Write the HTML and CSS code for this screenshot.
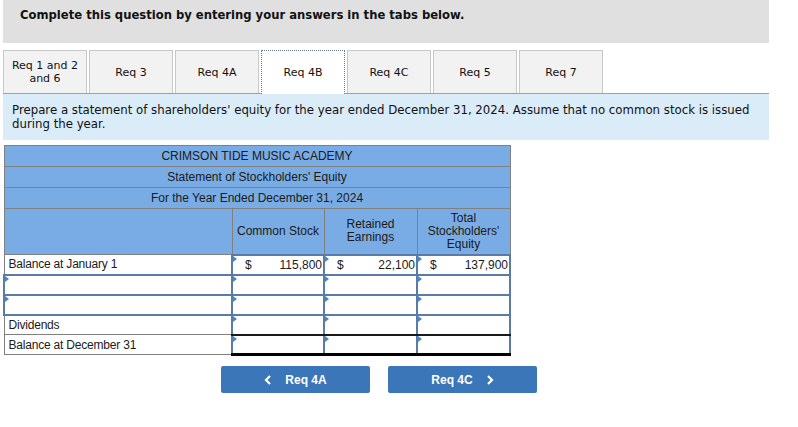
FILE: index.html
```html
<!DOCTYPE html>
<html>
<head>
<meta charset="utf-8">
<link rel="stylesheet" href="styles.css">
</head>
<body>
<div class="wrap">
  <div class="header">Complete this question by entering your answers in the tabs below.</div>
  <div class="tabs">
    <div class="tab">Req 1 and 2<br>and 6</div>
    <div class="tab">Req 3</div>
    <div class="tab">Req 4A</div>
    <div class="tab active">Req 4B</div>
    <div class="tab">Req 4C</div>
    <div class="tab">Req 5</div>
    <div class="tab">Req 7</div>
  </div>
  <div class="prompt">Prepare a statement of shareholders' equity for the year ended December 31, 2024. Assume that no common stock is issued during the year.</div>
  <table class="stmt">
    <colgroup>
      <col class="c1"><col class="c2"><col class="c3"><col class="c4">
    </colgroup>
    <tr class="title"><td colspan="4">CRIMSON TIDE MUSIC ACADEMY</td></tr>
    <tr class="title"><td colspan="4">Statement of Stockholders' Equity</td></tr>
    <tr class="title"><td colspan="4">For the Year Ended December 31, 2024</td></tr>
    <tr class="colhead">
      <td></td>
      <td>Common Stock</td>
      <td>Retained<br>Earnings</td>
      <td>Total<br>Stockholders'<br>Equity</td>
    </tr>
    <tr class="row">
      <td class="label">Balance at January 1</td>
      <td class="inp"><span class="cur">$</span><span class="num">115,800</span></td>
      <td class="inp"><span class="cur">$</span><span class="num">22,100</span></td>
      <td class="inp"><span class="cur">$</span><span class="num">137,900</span></td>
    </tr>
    <tr class="row">
      <td class="inp"></td><td class="inp"></td><td class="inp"></td><td class="inp"></td>
    </tr>
    <tr class="row">
      <td class="inp"></td><td class="inp"></td><td class="inp"></td><td class="inp"></td>
    </tr>
    <tr class="row under">
      <td class="label">Dividends</td><td class="inp"></td><td class="inp"></td><td class="inp"></td>
    </tr>
    <tr class="row total">
      <td class="label">Balance at December 31</td><td class="inp"></td><td class="inp"></td><td class="inp"></td>
    </tr>
  </table>
  <div class="nav">
    <div class="btn prev"><svg class="chev" width="8" height="10" viewBox="0 0 8 10"><polyline points="6,1 2,5 6,9" fill="none" stroke="#fff" stroke-width="2.2"/></svg>Req 4A</div>
    <div class="btn next">Req 4C<svg class="chev" width="8" height="10" viewBox="0 0 8 10"><polyline points="2,1 6,5 2,9" fill="none" stroke="#fff" stroke-width="2.2"/></svg></div>
  </div>
</div>
</body>
</html>
```

FILE: styles.css
```css
* { box-sizing: border-box; }
body {
  margin: 0;
  background: #fff;
  font-family: "DejaVu Sans", Verdana, sans-serif;
  color: #111;
}
.wrap {
  width: 769px;
  padding-left: 3px;
}
.header {
  background: #e0e0e0;
  height: 43px;
  padding: 8px 0 0 17px;
  font-size: 11.6px;
  font-weight: bold;
  color: #111;
}
.tabs {
  display: flex;
  gap: 2px;
  margin-top: 7px;
  height: 44px;
  border-bottom: 1px solid #a0a0a0;
}
.tab {
  width: 84px;
  height: 43px;
  background: #f2f2f2;
  border: 1px solid #c8c8c8;
  border-bottom: none;
  display: flex;
  align-items: center;
  justify-content: center;
  text-align: center;
  font-size: 11px;
  line-height: 13px;
  color: #111;
}
.tab.active {
  background: #fff;
  border: 1px dotted #6a7a90;
  border-bottom: none;
  height: 44px;
  position: relative;
  z-index: 1;
}
.prompt {
  background: #dbecf9;
  height: 46px;
  padding: 9px 9px 0 9px;
  font-size: 11.75px;
  line-height: 14px;
  color: #111;
}
.stmt {
  margin-top: 5px;
  width: 506px;
  border-collapse: collapse;
  font-family: "Liberation Sans", Arial, sans-serif;
  font-size: 12px;
  color: #1a1a1a;
  table-layout: fixed;
}
.c1 { width: 228px; }
.c2 { width: 92px; }
.c3 { width: 93px; }
.c4 { width: 93px; }
.stmt td {
  border: 1px solid #808080;
  padding: 0;
}
.title td {
  background: #79ace4;
  height: 21px;
  text-align: center;
}
.colhead td {
  background: #79ace4;
  height: 46px;
  text-align: center;
  line-height: 13px;
}
.row td {
  height: 20px;
  background: #fff;
}
.label {
  padding-left: 4px !important;
  letter-spacing: -0.2px;
}
.stmt td.inp {
  position: relative;
  border: 2px solid #5a7ba8;
  padding: 0 1px 0 12px;
}
.inp::before {
  content: "";
  position: absolute;
  left: 0;
  top: 0;
  border-top: 3px solid transparent;
  border-bottom: 3px solid transparent;
  border-left: 4px solid #4a86cc;
}
.cur { float: left; }
.num { float: right; }
.under td.inp { border-bottom: 2px solid #1a1a1a; }
.total td.inp { border-bottom: 3px solid #000; }
.nav {
  display: flex;
  gap: 18px;
  margin: 10px 0 0 218px;
}
.btn {
  width: 149px;
  height: 27px;
  background: #3b76b9;
  border-radius: 2px;
  color: #fff;
  font-family: "Liberation Sans", Arial, sans-serif;
  font-weight: bold;
  font-size: 12px;
  display: flex;
  align-items: center;
  justify-content: center;
}
.chev { display: block; }
.prev .chev { margin-right: 13px; }
.next .chev { margin-left: 13px; }
```
